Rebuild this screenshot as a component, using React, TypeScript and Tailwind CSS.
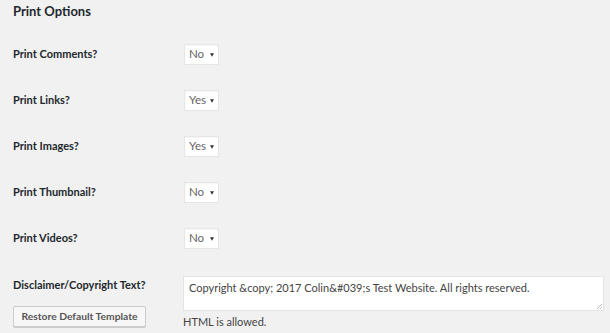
import React from "react";

const font = { fontFamily: 'Lato, "Noto Sans", sans-serif' };

function Sel({ v }: { v: string }) {
  return (
    <div className="relative flex h-[21px] w-[35px] items-center border border-[#e6e6e6] bg-white pl-[4px] text-[11.5px] text-[#666] shadow-[inset_0_1px_2px_rgba(0,0,0,0.04)]">
      <span className="leading-none">{v}</span>
      <svg className="absolute right-[4px] top-[8px]" width="4" height="4" viewBox="0 0 4 4">
        <path d="M0 0.3H4L2 3.7Z" fill="#333" />
      </svg>
    </div>
  );
}

const rows: [string, string][] = [
  ["Print Comments?", "No"],
  ["Print Links?", "Yes"],
  ["Print Images?", "Yes"],
  ["Print Thumbnail?", "No"],
  ["Print Videos?", "No"],
];

export default function App() {
  return (
    <div className="h-[333px] w-[610px] overflow-hidden bg-[#f1f1f1] pl-[13px]" style={font}>
      <div className="pt-[2px] text-[13px] font-bold leading-[18px] text-[#23282d]">Print Options</div>
      <div className="mt-[11px] flex flex-col">
        {rows.map(([l, v]) => (
          <div key={l} className="flex h-[46px] items-center">
            <div className="w-[171px] text-[11px] font-bold text-[#23282d]">{l}</div>
            <Sel v={v} />
          </div>
        ))}
      </div>
      <div className="mt-[15px] flex">
        <div className="w-[170px]">
          <div className="text-[11px] font-bold leading-[18px] text-[#23282d]">Disclaimer/Copyright Text?</div>
          <div className="mt-[12px] flex h-[21px] w-[133px] items-center justify-center rounded-[2px] border border-[#cccccc] bg-[#f7f7f7] text-[10.3px] font-bold text-[#555] shadow-[0_1px_0_#ccc]">
            Restore Default Template
          </div>
        </div>
        <div className="flex flex-col">
          <div className="relative h-[35px] w-[421px] border border-[#e4e4e4] bg-white pl-[5px] pt-[2px] text-[11px] leading-[18px] text-[#444]">
            Copyright &amp;copy; 2017 Colin&amp;#039;s Test Website. All rights reserved.
            <svg className="absolute bottom-[1px] right-[1px]" width="6" height="6" viewBox="0 0 6 6">
              <path d="M6 1L1 6M6 4L4 6" stroke="#aaa" strokeWidth="0.8" />
            </svg>
          </div>
          <div className="mt-[2px] text-[11px] leading-[18px] text-[#444]">HTML is allowed.</div>
        </div>
      </div>
    </div>
  );
}
